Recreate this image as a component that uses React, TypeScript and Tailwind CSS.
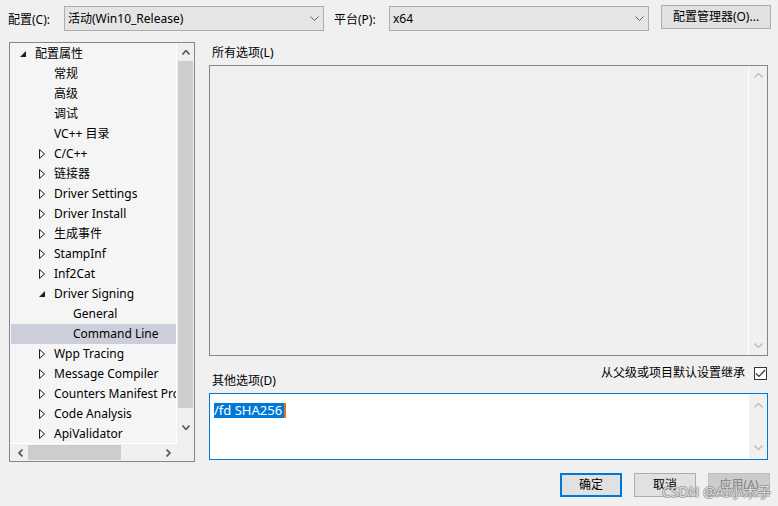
import React from "react";

const FONT = { fontFamily: '"Noto Sans", "Noto Sans CJK SC", sans-serif' };

function ChevronDown({ color = "#606060", w = 9, h = 5, sw = 1 }: { color?: string; w?: number; h?: number; sw?: number }) {
  return (
    <svg width={w} height={h} viewBox={`0 0 ${w} ${h}`}>
      <polyline points={`0.5,0.5 ${w / 2},${h - 0.5} ${w - 0.5},0.5`} fill="none" stroke={color} strokeWidth={sw} />
    </svg>
  );
}
function ChevronUp({ color = "#606060", w = 9, h = 5, sw = 1 }: { color?: string; w?: number; h?: number; sw?: number }) {
  return (
    <svg width={w} height={h} viewBox={`0 0 ${w} ${h}`}>
      <polyline points={`0.5,${h - 0.5} ${w / 2},0.5 ${w - 0.5},${h - 0.5}`} fill="none" stroke={color} strokeWidth={sw} />
    </svg>
  );
}
function ChevronLeft({ color = "#606060" }: { color?: string }) {
  return (
    <svg width={5} height={8} viewBox="0 0 5 8">
      <polyline points="4.5,0.5 1,4 4.5,7.5" fill="none" stroke={color} strokeWidth={1.8} />
    </svg>
  );
}
function ChevronRight({ color = "#606060" }: { color?: string }) {
  return (
    <svg width={5} height={8} viewBox="0 0 5 8">
      <polyline points="0.5,0.5 4,4 0.5,7.5" fill="none" stroke={color} strokeWidth={1.8} />
    </svg>
  );
}

function Expanded() {
  return (
    <svg width={6} height={6} viewBox="0 0 6 6">
      <polygon points="6,0 6,6 0,6" fill="#1e1e1e" />
    </svg>
  );
}
function Collapsed() {
  return (
    <svg width={6} height={10} viewBox="0 0 6 10">
      <polygon points="0.5,0.5 5.5,5 0.5,9.5" fill="none" stroke="#1e1e1e" strokeWidth={1} />
    </svg>
  );
}

type Item = { label: string; level: 0 | 1 | 2; state?: "open" | "closed"; selected?: boolean };

const items: Item[] = [
  { label: "配置属性", level: 0, state: "open" },
  { label: "常规", level: 1 },
  { label: "高级", level: 1 },
  { label: "调试", level: 1 },
  { label: "VC++ 目录", level: 1 },
  { label: "C/C++", level: 1, state: "closed" },
  { label: "链接器", level: 1, state: "closed" },
  { label: "Driver Settings", level: 1, state: "closed" },
  { label: "Driver Install", level: 1, state: "closed" },
  { label: "生成事件", level: 1, state: "closed" },
  { label: "StampInf", level: 1, state: "closed" },
  { label: "Inf2Cat", level: 1, state: "closed" },
  { label: "Driver Signing", level: 1, state: "open" },
  { label: "General", level: 2 },
  { label: "Command Line", level: 2, selected: true },
  { label: "Wpp Tracing", level: 1, state: "closed" },
  { label: "Message Compiler", level: 1, state: "closed" },
  { label: "Counters Manifest Processing", level: 1, state: "closed" },
  { label: "Code Analysis", level: 1, state: "closed" },
  { label: "ApiValidator", level: 1, state: "closed" },
];

function TreeRow({ item }: { item: Item }) {
  const pad = item.selected
    ? "pl-[46px] ml-px bg-[#cccedb]"
    : item.level === 0
    ? "pl-[9px]"
    : item.level === 1
    ? "pl-[28px]"
    : "pl-[47px]";
  return (
    <div className={`flex h-[20px] items-center whitespace-nowrap ${pad}`}>
      <div className="flex w-[16px] shrink-0 items-center justify-start pl-[1px]">
        {item.state === "open" ? <Expanded /> : item.state === "closed" ? <Collapsed /> : null}
      </div>
      <span className="text-[12px] leading-[20px] text-[#000]">{item.label}</span>
    </div>
  );
}

function Tree() {
  return (
    <div className="flex h-[420px] w-[186px] flex-col border border-[#828790] bg-[#f0f0f0]">
      <div className="flex h-[401px]">
        <div className="w-[167px] overflow-hidden border-r border-b border-white bg-[#f5f5f5] pt-[1px]">
          {items.map((it) => (
            <TreeRow key={it.label} item={it} />
          ))}
        </div>
        <div className="flex w-[17px] flex-col bg-[#f0f0f0]">
          <div className="flex h-[18px] items-center justify-center">
            <ChevronUp w={8} h={5} sw={1.8} />
          </div>
          <div className="mx-[1px] h-[347px] bg-[#cdcdcd]" />
          <div className="flex flex-1 items-center justify-center pt-[2px]">
            <ChevronDown w={8} h={5} sw={1.8} />
          </div>
        </div>
      </div>
      <div className="flex h-[17px]">
        <div className="flex w-[167px] items-center bg-[#f0f0f0]">
          <div className="flex w-[18px] justify-center pl-[2px]">
            <ChevronLeft />
          </div>
          <div className="h-[15px] w-[93px] bg-[#cdcdcd]" />
          <div className="flex-1" />
          <div className="flex w-[17px] justify-center">
            <ChevronRight />
          </div>
        </div>
        <div className="w-[17px] bg-[#f0f0f0]" />
      </div>
    </div>
  );
}

function Combo({ text }: { text: string }) {
  return (
    <div className="flex h-[25px] w-[260px] items-center justify-between border border-[#adadad] bg-[#e5e5e5] pl-[3px] pr-[4px]">
      <span className="text-[12px] text-black">{text}</span>
      <ChevronDown w={9} h={5} />
    </div>
  );
}

export default function App() {
  return (
    <div className="relative h-[506px] w-[778px] overflow-hidden bg-[#f0f0f0] text-black" style={FONT}>
      {/* top bar */}
      <div className="flex h-[42px] items-start pl-[8px]">
        <div className="mt-[7px] flex h-[25px] w-[56px] items-center text-[12px]">配置(C):</div>
        <div className="mt-[6px]">
          <Combo text="活动(Win10_Release)" />
        </div>
        <div className="ml-[10px] mt-[7px] flex h-[25px] w-[55px] items-center text-[12px]">平台(P):</div>
        <div className="mt-[6px]">
          <Combo text="x64" />
        </div>
        <div className="ml-[12px] mt-[5px] flex h-[24px] w-[110px] items-center justify-center border border-[#adadad] bg-[#e1e1e1] text-[12px]">
          配置管理器(O)...
        </div>
      </div>

      {/* main */}
      <div className="flex pl-[9px]">
        <Tree />
        <div className="ml-[14px] flex w-[559px] flex-col">
          <div className="h-[23px] pl-[3px] pt-[1px] text-[12px] leading-[20px]">所有选项(L)</div>
          <div className="flex h-[291px] border border-[#828790] bg-[#f0f0f0]">
            <div className="flex-1 border-r border-white" />
            <div className="flex w-[18px] flex-col items-center justify-between py-[7px]">
              <ChevronUp color="#c2c2c2" w={9} h={5} sw={1.6} />
              <ChevronDown color="#c2c2c2" w={9} h={5} sw={1.6} />
            </div>
          </div>
          <div className="flex h-[37px] justify-between">
            <div className="self-end pb-[2px] pl-[3px] text-[12px] leading-[20px]">其他选项(D)</div>
            <div className="mt-[7px] flex h-[20px] items-center self-start">
              <span className="text-[12px] leading-[20px]">从父级或项目默认设置继承</span>
              <div className="ml-[9px] mr-[1px] flex h-[13px] w-[13px] items-center justify-center border border-[#333] bg-white">
                <svg width={11} height={9} viewBox="0 0 11 9">
                  <polyline points="1,4.5 4,7.5 10,1" fill="none" stroke="#333" strokeWidth={1.2} />
                </svg>
              </div>
            </div>
          </div>
          <div className="flex h-[67px] border border-[#0078d7] bg-white">
            <div className="flex-1 pl-[4px] pt-[3px]">
              <span className="inline-flex h-[15px] items-center border-r-2 border-[#e8731f] bg-[#0078d7] pr-[2px] text-[13px] leading-[15px] text-white">
                /fd SHA256
              </span>
            </div>
            <div className="flex w-[18px] flex-col items-center justify-between bg-[#f0f0f0] py-[9px]">
              <ChevronUp color="#c2c2c2" w={9} h={5} sw={1.6} />
              <ChevronDown color="#c2c2c2" w={9} h={5} sw={1.6} />
            </div>
          </div>
        </div>
      </div>

      {/* buttons */}
      <div className="mt-[11px] flex justify-end gap-[12px] pr-[8px]">
        <div className="flex h-[24px] w-[62px] items-center justify-center border-2 border-[#0078d7] bg-[#e1e1e1] text-[12px]">
          确定
        </div>
        <div className="flex h-[24px] w-[62px] items-center justify-center border border-[#adadad] bg-[#e1e1e1] text-[12px]">
          取消
        </div>
        <div className="flex h-[24px] w-[62px] items-center justify-center border border-[#bfbfbf] bg-[#cccccc] text-[12px] text-[#838383]">
          应用(A)
        </div>
      </div>

      {/* watermark */}
      <div
        className="absolute left-[662px] top-[481px] whitespace-nowrap text-[14px] text-[rgba(255,255,255,0.7)]"
        style={{
          fontFamily: '"Noto Sans", "Noto Sans CJK SC", sans-serif',
          textShadow:
            "1px 0 0 rgba(120,120,120,0.55), -1px 0 0 rgba(120,120,120,0.55), 0 1px 0 rgba(120,120,120,0.55), 0 -1px 0 rgba(120,120,120,0.55)",
        }}
      >
        CSDN @AI小木子
      </div>
    </div>
  );
}
